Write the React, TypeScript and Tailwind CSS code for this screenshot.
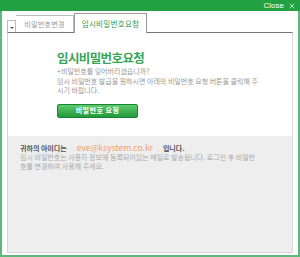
import { X } from "lucide-react";

const kr = { fontFamily: '"Noto Sans CJK KR", "Noto Sans", sans-serif' };

export default function App() {
  return (
    <div
      className="w-[300px] h-[257px] flex flex-col bg-[#5fb97a] overflow-hidden"
      style={kr}
    >
      {/* Title bar */}
      <div className="h-[11px] bg-[#22a143] flex items-center justify-end pr-[4px] gap-[4px] text-white">
        <span className="text-[8px] leading-[8px] font-['Liberation_Sans',sans-serif]">Close</span>
        <X className="w-[8px] h-[8px]" strokeWidth={2} />
      </div>

      {/* Window body */}
      <div className="flex-1 mx-[2px] mb-[2px] bg-white px-[5px] pt-[1px] pb-[2px] flex flex-col">
        {/* Tabs */}
        <div className="flex items-end h-[20px]">
          <div className="w-[9px] h-[12px] border border-[#bbb] border-b-0 flex items-end justify-center pb-[3px]">
            <div className="w-0 h-0 border-l-[2px] border-r-[2px] border-t-[2px] border-l-transparent border-r-transparent border-t-[#555]" />
          </div>
          <div className="w-[58px] h-[17px] border border-[#bbb] border-l-0 border-b-0 flex items-center justify-center text-[7px] text-[#999] tracking-[0.3px]">
            비밀번호변경
          </div>
          <div className="relative z-10 w-[73px] h-[20px] -mb-px bg-white border border-[#999] border-b-0 flex items-center justify-center text-[7.5px] text-[#2a9a4c] tracking-[0.3px]">
            임시비밀번호요청
          </div>
        </div>

        {/* Panel */}
        <div className="flex-1 border border-[#d6d6d6] border-t-[#777] flex flex-col">
          <div className="h-[103px] pl-[49px] pr-[10px] pt-[16px]">
            <h1 className="text-[12.5px] leading-[18px] font-bold text-[#36a558] tracking-[-0.6px]">
              임시비밀번호요청
            </h1>
            <p className="text-[7px] leading-[9.5px] text-[#999]">
              +비밀번호를 잊어버리셨습니까?
              <br />
              임시 비밀번호 발급을 원하시면 아래의 비밀번호 요청 버튼을 클릭해 주
              <br />
              시기 바랍니다.
            </p>
            <button className="mt-[8px] w-[81px] h-[14px] rounded-[2px] border border-[#1b8434] bg-gradient-to-b from-[#5ccb6b] to-[#1f9a3b] text-white text-[7px] font-bold tracking-[0.5px] flex items-center justify-center">
              비밀번호 요청
            </button>
          </div>

          <div className="flex-1 bg-[#eeeeee] px-[12px] pt-[7px]">
            <p className="text-[7px] leading-[9px] text-[#555] font-bold">
              귀하의 아이디는
              <span className="ml-[10px] mr-[10px] text-[#f3a06a] font-normal text-[8.5px]">
                eve@ksystem.co.kr
              </span>
              입니다.
            </p>
            <p className="text-[7px] leading-[9px] text-[#aaa]">
              임시 비밀번호는 사용자 정보에 등록되어있는 메일로 발송됩니다. 로그인 후 비밀번
              <br />
              호를 변경하여 사용해 주세요.
            </p>
          </div>
        </div>
      </div>
    </div>
  );
}
